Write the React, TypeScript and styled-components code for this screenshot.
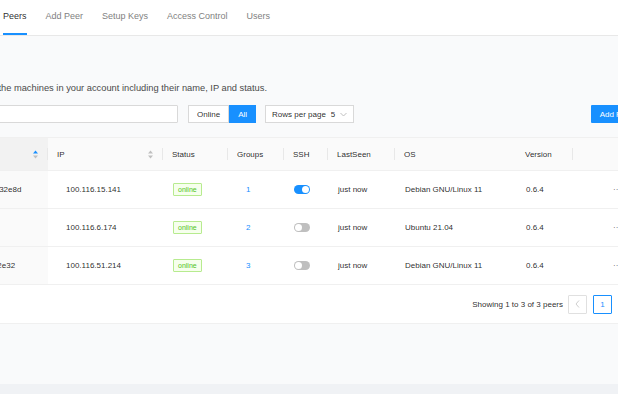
import styled, { createGlobalStyle } from "styled-components";

const GlobalStyle = createGlobalStyle`
    html, body {
        margin: 0;
        padding: 0;
        overflow: hidden;
        background: #f0f2f5;
    }
    body {
        font-family: "Liberation Sans", Arial, sans-serif;
        color: rgba(0, 0, 0, 0.85);
    }
`;

type Peer = {
    name: string;
    ip: string;
    groups: number;
    ssh: boolean;
    lastSeen: string;
    os: string;
    version: string;
};

const peers: Array<Peer> = [
    { name: "srv-1c94a32e8d", ip: "100.116.15.141", groups: 1, ssh: true, lastSeen: "just now", os: "Debian GNU/Linux 11", version: "0.6.4" },
    { name: "laptop", ip: "100.116.6.174", groups: 2, ssh: false, lastSeen: "just now", os: "Ubuntu 21.04", version: "0.6.4" },
    { name: "vm-9b1fd2e32", ip: "100.116.51.214", groups: 3, ssh: false, lastSeen: "just now", os: "Debian GNU/Linux 11", version: "0.6.4" },
];

const tabs = ["Peers", "Add Peer", "Setup Keys", "Access Control", "Users"];

// column widths, name column partly scrolled out on the left
const colWidths = [94, 115, 65, 56, 44, 67, 121, 57, 71];

function SortIcon({ up }: { up?: boolean }) {
    return (
        <svg width="5" height="9" viewBox="0 0 5 9">
            <path d="M2.5 0.5 L5 3.5 H0 Z" fill={up ? "#1890ff" : "#bfbfbf"} />
            <path d="M2.5 8.5 L5 5.5 H0 Z" fill="#bfbfbf" />
        </svg>
    );
}

function Chevron({ dir }: { dir: "left" | "right" }) {
    return (
        <svg width="5" height="8" viewBox="0 0 5 8">
            <path
                d={dir === "left" ? "M4 0.5 L1 4 L4 7.5" : "M1 0.5 L4 4 L1 7.5"}
                stroke="#c8c8c8"
                strokeWidth="0.9"
                fill="none"
            />
        </svg>
    );
}

function App() {
    return (
        <>
            <GlobalStyle />
            <Page>
                <Nav>
                    {tabs.map((t, i) => (
                        <Tab key={t} $active={i === 0}>
                            {t}
                        </Tab>
                    ))}
                </Nav>
                <Main>
                    <Content>
                        <Description>
                            A list of all the machines in your account including their name, IP and status.
                        </Description>
                        <FilterRow>
                            <SearchInput placeholder="" />
                            <Segmented>
                                <SegButton>Online</SegButton>
                                <SegButton $selected>All</SegButton>
                            </Segmented>
                            <RowsSelect>
                                <span>Rows per page</span>
                                <SelectValue>5</SelectValue>
                                <svg width="7" height="5" viewBox="0 0 7 5">
                                    <path d="M0.5 1 L3.5 4 L6.5 1" stroke="#bfbfbf" strokeWidth="1" fill="none" />
                                </svg>
                            </RowsSelect>
                            <AddButton>Add Peer</AddButton>
                        </FilterRow>
                        <Card>
                            <Table>
                                <colgroup>
                                    {colWidths.map((w, i) => (
                                        <col key={i} style={{ width: w }} />
                                    ))}
                                </colgroup>
                                <thead>
                                    <tr>
                                        <Th $sorted>
                                            <HeadInner>
                                                <span>Name</span>
                                                <SortIcon up />
                                            </HeadInner>
                                        </Th>
                                        <Th>
                                            <HeadInner>
                                                <span>IP</span>
                                                <SortIcon />
                                            </HeadInner>
                                        </Th>
                                        <Th>Status</Th>
                                        <Th>Groups</Th>
                                        <Th>SSH</Th>
                                        <Th>LastSeen</Th>
                                        <Th $noSep>OS</Th>
                                        <Th>Version</Th>
                                        <Th $noSep></Th>
                                    </tr>
                                </thead>
                                <tbody>
                                    {peers.map((p) => (
                                        <tr key={p.ip}>
                                            <Td $sorted>{p.name}</Td>
                                            <Td $indent={18}>{p.ip}</Td>
                                            <Td>
                                                <Tag>online</Tag>
                                            </Td>
                                            <Td $indent={18}>
                                                <GroupLink>{p.groups}</GroupLink>
                                            </Td>
                                            <Td>
                                                <Toggle $on={p.ssh}>
                                                    <Knob />
                                                </Toggle>
                                            </Td>
                                            <Td>{p.lastSeen}</Td>
                                            <Td>{p.os}</Td>
                                            <Td>{p.version}</Td>
                                            <Td $indent={40}>
                                                <Dots>···</Dots>
                                            </Td>
                                        </tr>
                                    ))}
                                </tbody>
                            </Table>
                            <Pagination>
                                <PageInfo>Showing 1 to 3 of 3 peers</PageInfo>
                                <PageButton>
                                    <Chevron dir="left" />
                                </PageButton>
                                <PageButton $current>1</PageButton>
                                <PageButton>
                                    <Chevron dir="right" />
                                </PageButton>
                            </Pagination>
                        </Card>
                    </Content>
                </Main>
            </Page>
        </>
    );
}

const Page = styled.div`
    width: 618px;
    height: 394px;
    overflow: hidden;
    display: flex;
    flex-direction: column;
    background: #f0f2f5;
`;

const Nav = styled.nav`
    height: 35px;
    flex-shrink: 0;
    display: flex;
    gap: 19px;
    padding-left: 3px;
    background: #ffffff;
    border-bottom: 1px solid #e8e8e8;
`;

const Tab = styled.div<{ $active?: boolean }>`
    font-size: 9px;
    line-height: 33px;
    color: ${(p) => (p.$active ? "rgba(0, 0, 0, 0.85)" : "#7f7f7f")};
    border-bottom: 2px solid ${(p) => (p.$active ? "#1890ff" : "transparent")};
    white-space: nowrap;
`;

const Main = styled.main`
    height: 348px;
    flex-shrink: 0;
    overflow: hidden;
    background: #f9fafb;
`;

const Content = styled.div`
    width: 690px;
    margin-left: -46px;
    padding-top: 46px;
`;

const Description = styled.p`
    margin: 0;
    font-size: 9.3px;
    line-height: 12px;
    color: #4a4a4a;
    white-space: nowrap;
`;

const FilterRow = styled.div`
    display: flex;
    align-items: center;
    height: 18px;
    margin-top: 11px;
`;

const SearchInput = styled.input`
    box-sizing: border-box;
    width: 224px;
    height: 18px;
    margin: 0 10px 0 0;
    padding: 0 6px;
    border: 1px solid #d9d9d9;
    border-radius: 1px;
    background: #ffffff;
    outline: none;
`;

const Segmented = styled.div`
    display: flex;
    height: 18px;
    margin-right: 9px;
`;

const SegButton = styled.div<{ $selected?: boolean }>`
    box-sizing: border-box;
    height: 18px;
    padding: 0 8px;
    display: flex;
    align-items: center;
    font-size: 8px;
    border: 1px solid ${(p) => (p.$selected ? "#1890ff" : "#d9d9d9")};
    background: ${(p) => (p.$selected ? "#1890ff" : "#ffffff")};
    color: ${(p) => (p.$selected ? "#ffffff" : "rgba(0, 0, 0, 0.85)")};
`;

const RowsSelect = styled.div`
    box-sizing: border-box;
    width: 89px;
    height: 18px;
    display: flex;
    align-items: center;
    padding: 0 6px;
    font-size: 8px;
    border: 1px solid #d9d9d9;
    background: #ffffff;
    color: rgba(0, 0, 0, 0.85);
    white-space: nowrap;

    svg {
        flex-shrink: 0;
        margin-left: 5px;
    }
`;

const SelectValue = styled.span`
    margin-left: 5px;
`;

const AddButton = styled.button`
    margin-left: auto;
    height: 18px;
    padding: 0 11px 0 9px;
    border: none;
    border-radius: 1px;
    background: #1890ff;
    color: #ffffff;
    font-family: inherit;
    font-size: 8px;
    white-space: nowrap;
`;

const Card = styled.section`
    margin-top: 14px;
    background: #ffffff;
    border-top: 1px solid #f0f0f0;
    border-bottom: 1px solid #f0f0f0;
`;

const Table = styled.table`
    width: 100%;
    table-layout: fixed;
    border-collapse: collapse;
    font-size: 8px;
`;

const Th = styled.th<{ $sorted?: boolean; $noSep?: boolean }>`
    height: 32px;
    padding: 0 10px 0 9px;
    text-align: left;
    font-weight: normal;
    color: rgba(0, 0, 0, 0.85);
    border-bottom: 1px solid #f0f0f0;
    white-space: nowrap;
    background: ${(p) =>
        p.$noSep
            ? p.$sorted
                ? "#f2f2f2"
                : "#fafafa"
            : `linear-gradient(#e8e8e8, #e8e8e8) right center / 1px 12px no-repeat, ${p.$sorted ? "#f2f2f2" : "#fafafa"}`};
`;

const HeadInner = styled.div`
    display: flex;
    align-items: center;
    justify-content: space-between;
`;

const Td = styled.td<{ $sorted?: boolean; $indent?: number }>`
    height: 37px;
    padding: 0 10px 0 ${(p) => p.$indent ?? 10}px;
    border-bottom: 1px solid #f0f0f0;
    background: ${(p) => (p.$sorted ? "#fafafa" : "#ffffff")};
    color: rgba(0, 0, 0, 0.85);
    white-space: nowrap;
    overflow: hidden;
`;

const Tag = styled.span`
    display: inline-block;
    box-sizing: border-box;
    height: 13px;
    padding: 0 4px;
    line-height: 11px;
    font-size: 7px;
    color: #52c41a;
    background: #f6ffed;
    border: 1px solid #b7eb8f;
    border-radius: 1px;
`;

const GroupLink = styled.span`
    color: #1890ff;
`;

const Toggle = styled.span<{ $on: boolean }>`
    display: inline-flex;
    align-items: center;
    justify-content: ${(p) => (p.$on ? "flex-end" : "flex-start")};
    box-sizing: border-box;
    width: 16px;
    height: 9px;
    padding: 1px;
    border-radius: 5px;
    background: ${(p) => (p.$on ? "#1890ff" : "#bfbfbf")};
    vertical-align: middle;
`;

const Knob = styled.span`
    width: 7px;
    height: 7px;
    border-radius: 50%;
    background: #ffffff;
`;

const Dots = styled.span`
    color: #595959;
`;

const Pagination = styled.div`
    height: 38px;
    display: flex;
    align-items: center;
    justify-content: flex-end;
    gap: 6px;
    padding-right: 7px;
`;

const PageInfo = styled.span`
    font-size: 8px;
    color: rgba(0, 0, 0, 0.85);
    margin-right: -1px;
`;

const PageButton = styled.div<{ $current?: boolean }>`
    box-sizing: border-box;
    width: 19px;
    height: 19px;
    display: flex;
    align-items: center;
    justify-content: center;
    font-size: 8px;
    border: 1px solid ${(p) => (p.$current ? "#1890ff" : "#e0e0e0")};
    border-radius: 1px;
    color: ${(p) => (p.$current ? "#1890ff" : "#c4c4c4")};
    background: #ffffff;
`;

export default App;
